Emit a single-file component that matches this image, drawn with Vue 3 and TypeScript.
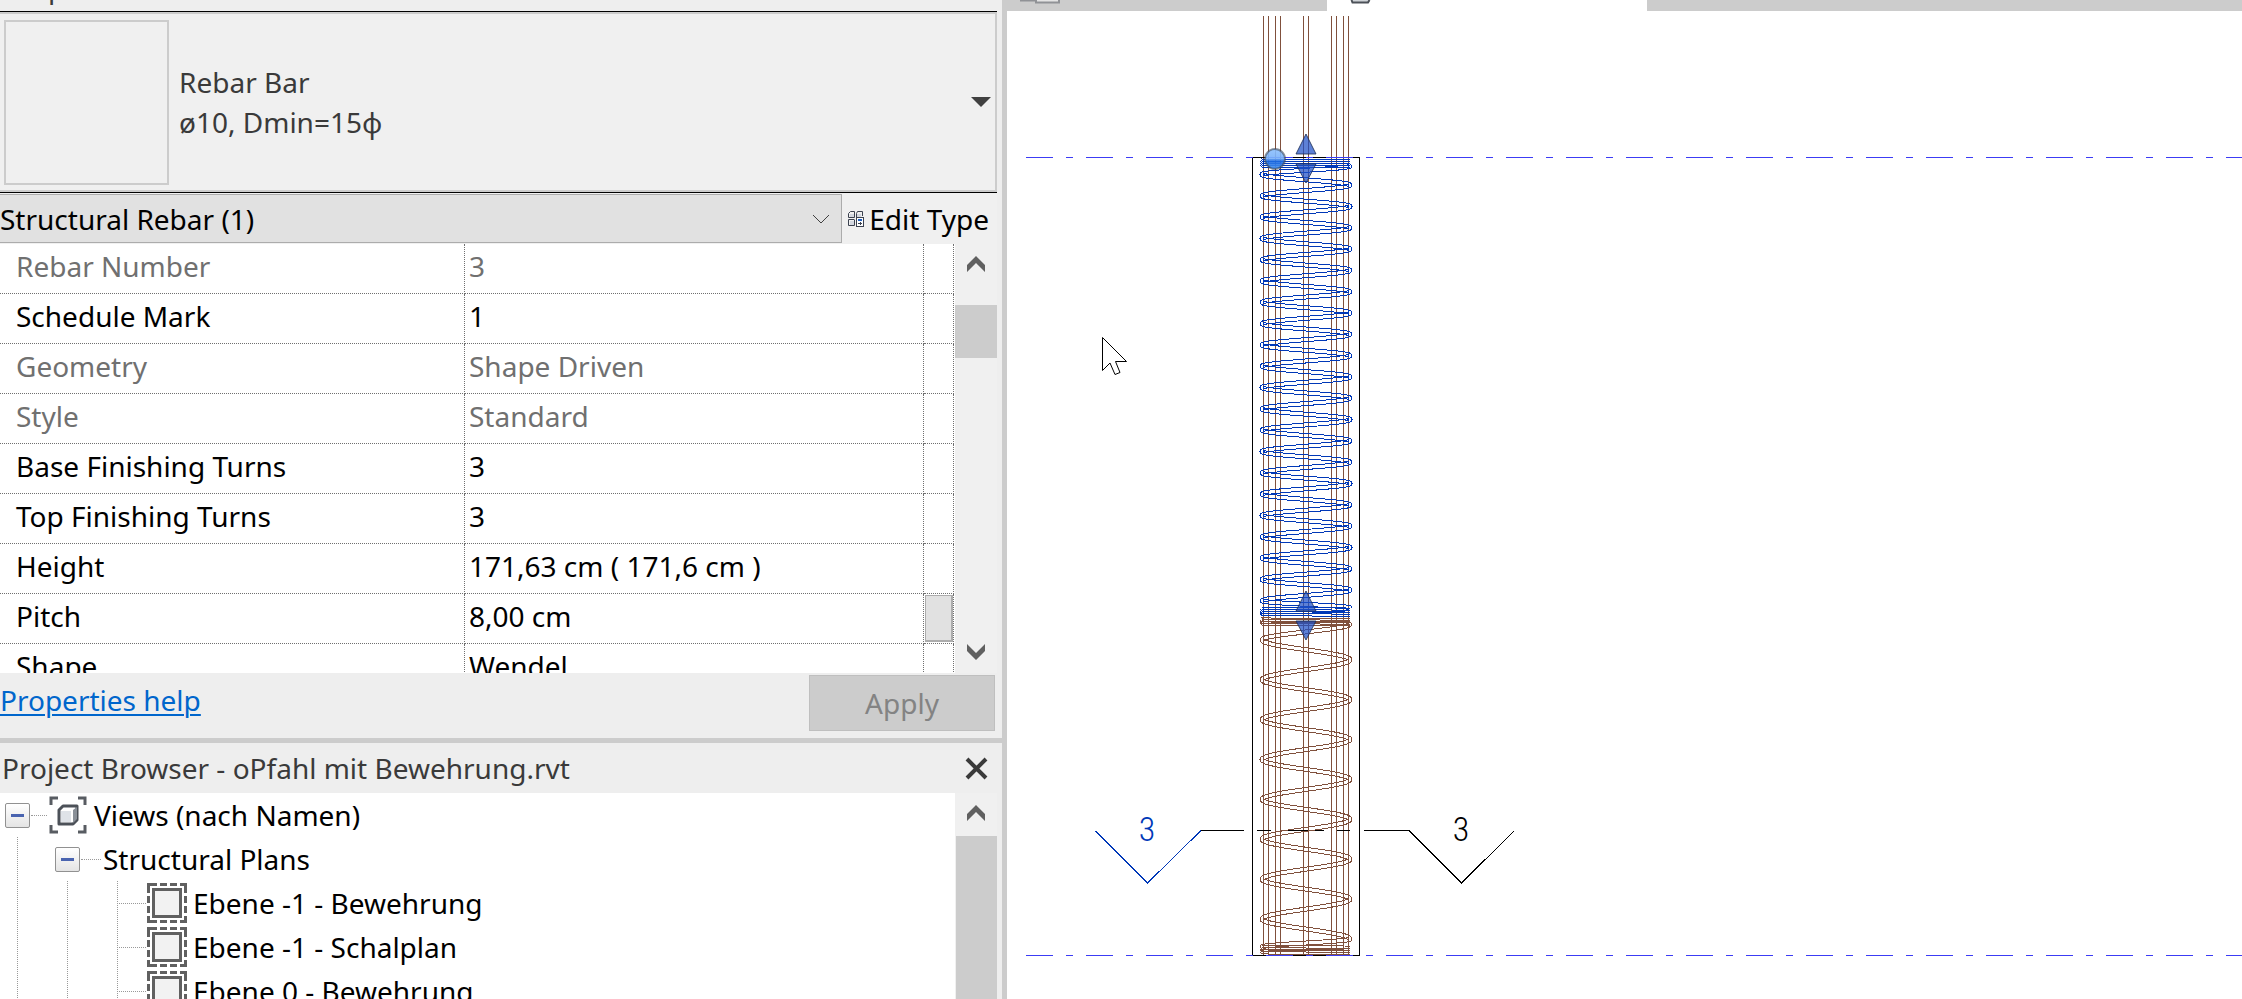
<script setup lang="ts">
import { ref } from 'vue'

interface Property {
  name: string
  value: string
  readOnly?: boolean
  association?: boolean
}

const properties: Property[] = [
  { name: 'Rebar Number', value: '3', readOnly: true },
  { name: 'Schedule Mark', value: '1' },
  { name: 'Geometry', value: 'Shape Driven', readOnly: true },
  { name: 'Style', value: 'Standard', readOnly: true },
  { name: 'Base Finishing Turns', value: '3' },
  { name: 'Top Finishing Turns', value: '3' },
  { name: 'Height', value: '171,63 cm ( 171,6 cm )' },
  { name: 'Pitch', value: '8,00 cm', association: true },
  { name: 'Shape', value: 'Wendel' },
]

const plans = ref<string[]>(['Ebene -1 - Bewehrung', 'Ebene -1 - Schalplan', 'Ebene 0 - Bewehrung'])

const barLines = [1263, 1268, 1275, 1280, 1303, 1308, 1331, 1336, 1343, 1348]

type Knot = [number, number]

const AXIS = 1306
const AMPLITUDE = 44
const RADIUS = 2

/* Height of the spiral after a number of half turns, linear between knots. */
function heightAt(knots: Knot[], n: number): number {
  for (let i = 1; i < knots.length; i++) {
    const [n0, y0] = knots[i - 1]
    const [n1, y1] = knots[i]
    if (n <= n1) return y0 + ((y1 - y0) * (n - n0)) / (n1 - n0)
  }
  return knots[knots.length - 1][1]
}

/* One outline of the spiral bar, offset sideways from its centre line.
   The dense finishing turns show their front halves only. */
function spiral(knots: Knot[], side: number): string {
  const last = knots[knots.length - 1][0]
  const bandTop = knots[1][0]
  const bandBottom = knots[knots.length - 2][0]
  const steps = last * 48
  let path = ''
  let penDown = false
  for (let i = 0; i <= steps; i++) {
    const n = i / 48
    const visible = (n >= bandTop && n <= bandBottom) || Math.floor(n) % 2 === 1
    if (!visible) {
      penDown = false
      continue
    }
    const slope = heightAt(knots, Math.min(n + 0.01, last)) - heightAt(knots, Math.max(n - 0.01, 0))
    const dx = -AMPLITUDE * Math.PI * Math.sin(Math.PI * n)
    const dy = slope / 0.02
    const length = Math.hypot(dx, dy) || 1
    const x = AXIS + AMPLITUDE * Math.cos(Math.PI * n) - (side * RADIUS * dy) / length
    const y = heightAt(knots, n) + (side * RADIUS * dx) / length
    path += `${penDown ? 'L' : 'M'}${x.toFixed(2)} ${y.toFixed(2)}`
    penDown = true
  }
  return path
}

const upperKnots: Knot[] = [[0, 160], [6, 166], [7, 174.5], [47, 600.7], [48, 608], [54, 614.5]]
const lowerKnots: Knot[] = [[0, 619], [6, 624], [7, 639.8], [22, 939], [23, 947], [28, 953]]
const upperSpiral = [spiral(upperKnots, 1), spiral(upperKnots, -1)]
const lowerSpiral = [spiral(lowerKnots, 1), spiral(lowerKnots, -1)]
</script>

<template>
  <main class="workspace">
    <div class="dock">
      <section class="properties">
        <header class="clipped-title"><span>Properties</span></header>
        <button class="type-selector" type="button">
          <span class="preview"></span>
          <span class="type-name">Rebar Bar<br />ø10, Dmin=15ϕ</span>
          <svg class="caret" viewBox="0 0 20 10"><path d="M0 0H20L10 10Z" /></svg>
        </button>
        <div class="filter-row">
          <div class="filter">
            <select aria-label="Category filter">
              <option>Structural Rebar (1)</option>
            </select>
            <svg class="chevron" viewBox="0 0 18 10"><path d="M1 1L9 9L17 1" /></svg>
          </div>
          <button class="edit-type" type="button">
            <svg viewBox="0 0 16 16">
              <path class="soft" d="M2 3h4v4H2zM9 3h4v3H9zM2 10h4v4H2z" />
              <path class="grid" d="M2.500 .5H6.500V6.500H.5V2.500ZM9.500 .5H14.500V5M8.500 6.500V2.500L9.500 .5M6 8.500H.5V14.500H6.500V8.500" />
              <rect class="sheet" x="8.500" y="6.500" width="7" height="9" />
              <path class="mark" d="M10 8h4v2h-4z" />
              <path class="grid" d="M10 12.500H14M12.500 11V14" />
            </svg>
            <span>Edit Type</span>
          </button>
        </div>
        <div class="grid-area">
          <div class="table-clip">
            <table>
              <colgroup><col class="col-name" /><col /><col class="col-assoc" /></colgroup>
              <tbody>
                <tr v-for="p in properties" :key="p.name" :class="{ muted: p.readOnly }">
                  <th scope="row">{{ p.name }}</th>
                  <td>{{ p.value }}</td>
                  <td class="assoc"><button v-if="p.association" type="button" aria-label="Associate parameter"></button></td>
                </tr>
              </tbody>
            </table>
          </div>
          <div class="scrollbar">
            <svg class="arrow" viewBox="0 0 18 16"><path d="M0 9L9 0L18 9V16L9 7L0 16Z" /></svg>
            <div class="thumb"></div>
            <svg class="arrow" viewBox="0 0 18 16"><path d="M0 7L9 16L18 7V0L9 9L0 0Z" /></svg>
          </div>
        </div>
        <footer>
          <a href="#help">Properties help</a>
          <button class="apply" type="button" disabled>Apply</button>
        </footer>
      </section>

      <section class="browser">
        <header>
          <h2>Project Browser - oPfahl mit Bewehrung.rvt</h2>
          <button class="close" type="button" aria-label="Close">
            <svg viewBox="0 0 23 23"><path d="M2 2L21 21M21 2L2 21" /></svg>
          </button>
        </header>
        <div class="browser-body">
          <ul class="tree">
            <li class="node root">
              <button class="toggle" type="button" aria-label="Collapse Views"></button>
              <span class="link root-link"></span>
              <svg class="views-icon" viewBox="0 0 38 38">
                <path class="corner" d="M2 9V2H9M29 2H36V9M36 29V36H29M9 36H2V29" />
                <path class="cube" d="M10 14L14 10H28V24L24 28H10Z" />
                <path class="face" d="M12 15H22V26H12Z" />
                <path class="side" d="M24 14L28 11V23L24 27Z" />
              </svg>
              <span>Views (nach Namen)</span>
            </li>
            <li class="node group">
              <button class="toggle" type="button" aria-label="Collapse Structural Plans"></button>
              <span class="link group-link"></span>
              <span>Structural Plans</span>
            </li>
            <li v-for="plan in plans" :key="plan" class="node leaf">
              <span class="link leaf-link"></span>
              <svg class="plan-icon" viewBox="0 0 40 40">
                <path class="dashes" d="M1.500 10V1.500H10M13 1.500H20M23 1.500H30M33 1.500H38.500V10M38.500 13V20M38.500 23V30M38.500 33V38.500H33M30 38.500H23M20 38.500H13M10 38.500H1.500V33M1.500 30V23M1.500 20V13" />
                <rect x="6.500" y="6.500" width="27" height="27" />
              </svg>
              <span>{{ plan }}</span>
            </li>
          </ul>
          <div class="scrollbar">
            <svg class="arrow" viewBox="0 0 18 16"><path d="M0 9L9 0L18 9V16L9 7L0 16Z" /></svg>
            <div class="thumb"></div>
          </div>
        </div>
      </section>
    </div>

    <section class="canvas" aria-label="Drawing view">
      <svg viewBox="1007 0 1235 999" preserveAspectRatio="xMinYMin slice">
        <rect class="tabs" x="1007" y="0" width="320" height="11" />
        <rect class="tabs" x="1647" y="0" width="4000" height="11" />
        <path class="tab-icon-idle" d="M1020 .5H1035M1036 0V2.500H1059V0" />
        <path class="tab-icon" d="M1351.500 0L1352.500 2.500H1368L1369.500 0" />

        <g class="crisp">
          <path v-for="x in barLines" :key="x" class="bar" :d="`M${x}.5 16V955`" />
          <path class="pile" d="M1252.500 157.500H1359.500V955.500H1252.500Z" />
          <path class="cut" d="M1201 830.500H1244M1257 830.500H1271M1284 830.500H1324M1337 830.500H1350M1364 830.500H1409" />
          <path v-for="(d, i) in lowerSpiral" :key="`l${i}`" class="lower" :d="d" />
          <path v-for="(d, i) in upperSpiral" :key="`u${i}`" class="upper" :d="d" />
          <path class="level" d="M1026 157.500H5000M1026 955.500H5000" />
          <path class="section-mark selected" d="M1095.500 831L1147.500 883L1201 830.500" />
          <path class="section-mark" d="M1409 830.500L1461.500 883L1514 831" />
        </g>
        <text class="tag selected" x="1147" y="841">3</text>
        <text class="tag" x="1461" y="841">3</text>

        <g class="grips">
          <path d="M1306 134L1316 154H1296ZM1296 164H1316L1306 183ZM1306 591L1316 611H1296ZM1296 621H1316L1306 640Z" />
        </g>
        <defs>
          <linearGradient id="knob" x1="0" y1="0" x2="0" y2="1">
            <stop offset="0" stop-color="#8cc0ff" />
            <stop offset=".5" stop-color="#78b0f8" />
            <stop offset=".6" stop-color="#1a68e0" />
            <stop offset="1" stop-color="#4c98f4" />
          </linearGradient>
        </defs>
        <circle class="knob" cx="1275" cy="159" r="10" />
        <path class="pointer" d="M1102.500 337.500V370.500L1110 363L1115 374.500L1120 372.500L1115.500 361.500H1126.500Z" />
      </svg>
    </section>
  </main>
</template>

<style>
body {
  margin: 0;
}
</style>

<style scoped>
.workspace {
  display: grid;
  grid-template-columns: 1007fr 1235fr;
  height: 100vh;
  overflow: hidden;
  background: #fff;
  color: #000;
  font-family: "Noto Sans", "Open Sans", sans-serif;
  font-size: 28px;
  line-height: 40px;
}

button,
select {
  margin: 0;
  padding: 0;
  border: 0;
  border-radius: 0;
  background: none;
  color: inherit;
  font: inherit;
}

.dock {
  display: grid;
  grid-template-rows: 743fr 256fr;
  min-width: 0;
  min-height: 0;
  border-right: 5px solid #ccc;
  background: #eee;
}

.properties {
  display: flex;
  flex-direction: column;
  min-height: 0;
  border-bottom: 5px solid #ccc;
}

.clipped-title {
  display: flex;
  align-items: flex-end;
  height: 11px;
  padding-left: 3px;
  overflow: hidden;
  color: #3a3a3a;
}

.clipped-title span {
  margin-bottom: 4px;
}

.type-selector {
  display: flex;
  align-items: center;
  height: 182px;
  margin-right: 5px;
  padding: 0 4px;
  border-top: 1px solid #000;
  border-bottom: 1px solid #000;
  background: #f0f0f0;
  box-shadow: inset -2px 0 #ccc, inset 0 2px #ccc, inset 0 -2px #ccc;
  color: #3a3a3a;
  text-align: left;
}

.preview {
  box-sizing: border-box;
  width: 165px;
  height: 165px;
  border: 2px solid #ccc;
}

.type-name {
  flex: 1;
  margin-left: 10px;
}

.caret {
  width: 20px;
  height: 10px;
  margin-right: 2px;
  fill: #404040;
}

.filter-row {
  display: flex;
  align-items: center;
  height: 51px;
  margin-right: 5px;
  background: #f0f0f0;
}

.filter {
  display: grid;
  flex: 1;
  align-items: center;
}

.filter select {
  grid-area: 1 / 1;
  width: 100%;
  height: 49px;
  border: 1px solid #acacac;
  border-left: 0;
  background: #e1e1e1;
  appearance: none;
}

.chevron {
  grid-area: 1 / 1;
  justify-self: end;
  width: 18px;
  height: 10px;
  margin-right: 12px;
  fill: none;
  stroke: #404040;
  pointer-events: none;
}

.edit-type {
  display: flex;
  align-items: center;
  gap: 5px;
  padding: 0 8px 0 6px;
}

.edit-type svg {
  width: 16px;
  height: 16px;
}

.soft {
  fill: #d4d8e0;
}

.grid {
  fill: none;
  stroke: #3c4250;
}

.sheet {
  fill: #fff;
  stroke: #3c4250;
}

.mark {
  fill: #2060c0;
}

.grid-area,
.browser-body {
  display: flex;
  flex: 1;
  min-height: 0;
}

.grid-area {
  margin-right: 5px;
}

.table-clip {
  flex: 1;
  overflow: hidden;
  padding-right: 1px;
  background: #fff;
}

table {
  width: 100%;
  border-spacing: 0;
  table-layout: fixed;
}

.col-name {
  width: 465px;
}

.col-assoc {
  width: 30px;
}

th,
td {
  height: 43px;
  padding: 0 0 6px 4px;
  border-right: 1px dotted #707070;
  border-bottom: 1px dotted #707070;
  font-weight: 400;
  text-align: left;
  white-space: nowrap;
}

th {
  padding-left: 16px;
}

.muted {
  color: #707070;
}

.assoc {
  height: 49px;
  padding: 0 0 0 1px;
}

.assoc button {
  display: block;
  width: 28px;
  height: 47px;
  border: 1px solid #acacac;
  border-right-width: 2px;
  border-bottom-width: 2px;
  background: #e1e1e1;
}

.scrollbar {
  display: flex;
  flex-direction: column;
  align-items: center;
  width: 42px;
  background: #f0f0f0;
}

.arrow {
  flex: none;
  width: 18px;
  height: 16px;
  margin-top: 12px;
  fill: #606060;
}

.grid-area .thumb {
  flex: none;
  width: 42px;
  height: 53px;
  margin: 33px 0 auto;
  background: #ccc;
}

.grid-area .arrow:last-child {
  margin-bottom: 13px;
}

footer {
  display: flex;
  justify-content: space-between;
  height: 65px;
  padding-right: 7px;
}

footer a {
  margin-top: 7px;
  color: #0066cc;
  text-decoration-thickness: 2px;
  text-underline-offset: 3px;
}

.apply {
  width: 186px;
  height: 56px;
  margin-top: 2px;
  border: 1px solid #bfbfbf;
  background: #ccc;
  color: #838383;
}

.browser {
  display: flex;
  flex-direction: column;
  min-height: 0;
  overflow: hidden;
}

.browser header {
  display: flex;
  flex: none;
  align-items: center;
  justify-content: space-between;
  height: 50px;
  padding: 0 14px 0 2px;
  color: #3a3a3a;
}

h2 {
  margin: 0;
  font-size: 28px;
  font-weight: 400;
}

.close,
.close svg {
  display: block;
  width: 23px;
  height: 23px;
}

.close path {
  stroke: #3a3a3a;
  stroke-width: 4;
}

.browser-body {
  margin-right: 5px;
  overflow: hidden;
}

.browser .thumb {
  flex: 1;
  width: 41px;
  margin-top: 15px;
  background: #ccc;
}

.tree {
  flex: 1;
  margin: 0;
  padding: 0;
  background: #fff;
  list-style: none;
}

.node {
  display: flex;
  align-items: center;
  height: 44px;
  white-space: nowrap;
}

/* Dotted guide lines of the open ancestors run through each row. */
.root {
  padding-left: 5px;
}

.group {
  padding-left: 55px;
  background: repeating-linear-gradient(#999 0 1px, transparent 1px 2px) 17px 0 / 1px 100% no-repeat;
}

.leaf {
  padding-left: 117px;
  background: repeating-linear-gradient(#999 0 1px, transparent 1px 2px) 17px 0 / 1px 100% no-repeat,
    repeating-linear-gradient(#999 0 1px, transparent 1px 2px) 67px 0 / 1px 100% no-repeat,
    repeating-linear-gradient(#999 0 1px, transparent 1px 2px) 117px 0 / 1px 100% no-repeat;
}

.toggle {
  box-sizing: border-box;
  width: 25px;
  height: 25px;
  border: 1px solid #919191;
  border-radius: 2px;
  background: linear-gradient(#4a64b0, #4a64b0) center / 13px 3px no-repeat, linear-gradient(#fff, #e4e4e4);
}

.link {
  height: 0;
  border-top: 1px dotted #999;
}

.root-link {
  width: 16px;
  margin: 0 2px 0 1px;
}

.group-link {
  width: 20px;
  margin: 0 2px 0 1px;
}

.leaf-link {
  width: 29px;
  margin-right: 1px;
}

.views-icon {
  width: 38px;
  height: 38px;
  margin-right: 7px;
}

.corner {
  fill: none;
  stroke: #585c62;
  stroke-width: 3;
}

.cube {
  fill: #fff;
  stroke: #4c5158;
  stroke-width: 3;
  stroke-linejoin: round;
}

.face {
  fill: #dfe3e8;
}

.side {
  fill: #8a9098;
}

.plan-icon {
  width: 40px;
  height: 40px;
  margin-right: 6px;
}

.plan-icon rect {
  fill: #f2f2f2;
  stroke: #606060;
  stroke-width: 3;
}

.dashes {
  fill: none;
  stroke: #606060;
  stroke-width: 3;
}

.canvas {
  min-width: 0;
  min-height: 0;
  overflow: hidden;
}

.canvas svg {
  display: block;
  width: 100%;
  height: 100%;
}

.crisp {
  shape-rendering: crispEdges;
}

.crisp path {
  fill: none;
}

.tabs {
  fill: #ccc;
}

.tab-icon-idle {
  fill: #e4e4e4;
  stroke: #909296;
  stroke-width: 2;
}

.tab-icon {
  fill: #d0d4d8;
  stroke: #4c5158;
  stroke-width: 2;
}

.bar,
.lower {
  stroke: #80503c;
}

.upper {
  stroke: #0038b8;
}

.pile,
.section-mark,
.cut {
  stroke: #000;
}

.section-mark.selected {
  stroke: #0038b8;
}

.level {
  stroke: #3c3cf4;
  stroke-dasharray: 27 13 7 13;
}

.tag {
  fill: #000;
  font-family: "Liberation Sans Narrow", "Roboto Condensed", Roboto, sans-serif;
  font-size: 34px;
  font-weight: 300;
  text-anchor: middle;
}

.tag.selected {
  fill: #0038b8;
}

.grips path {
  fill: #1e50c8;
  fill-opacity: 0.72;
  stroke: #1c2c50;
  stroke-opacity: 0.8;
}

.knob {
  fill: url(#knob);
  fill-opacity: 0.9;
  stroke: #3c4858;
  stroke-opacity: 0.6;
  stroke-width: 2;
}

.pointer {
  fill: #fff;
  stroke: #000;
}
</style>
